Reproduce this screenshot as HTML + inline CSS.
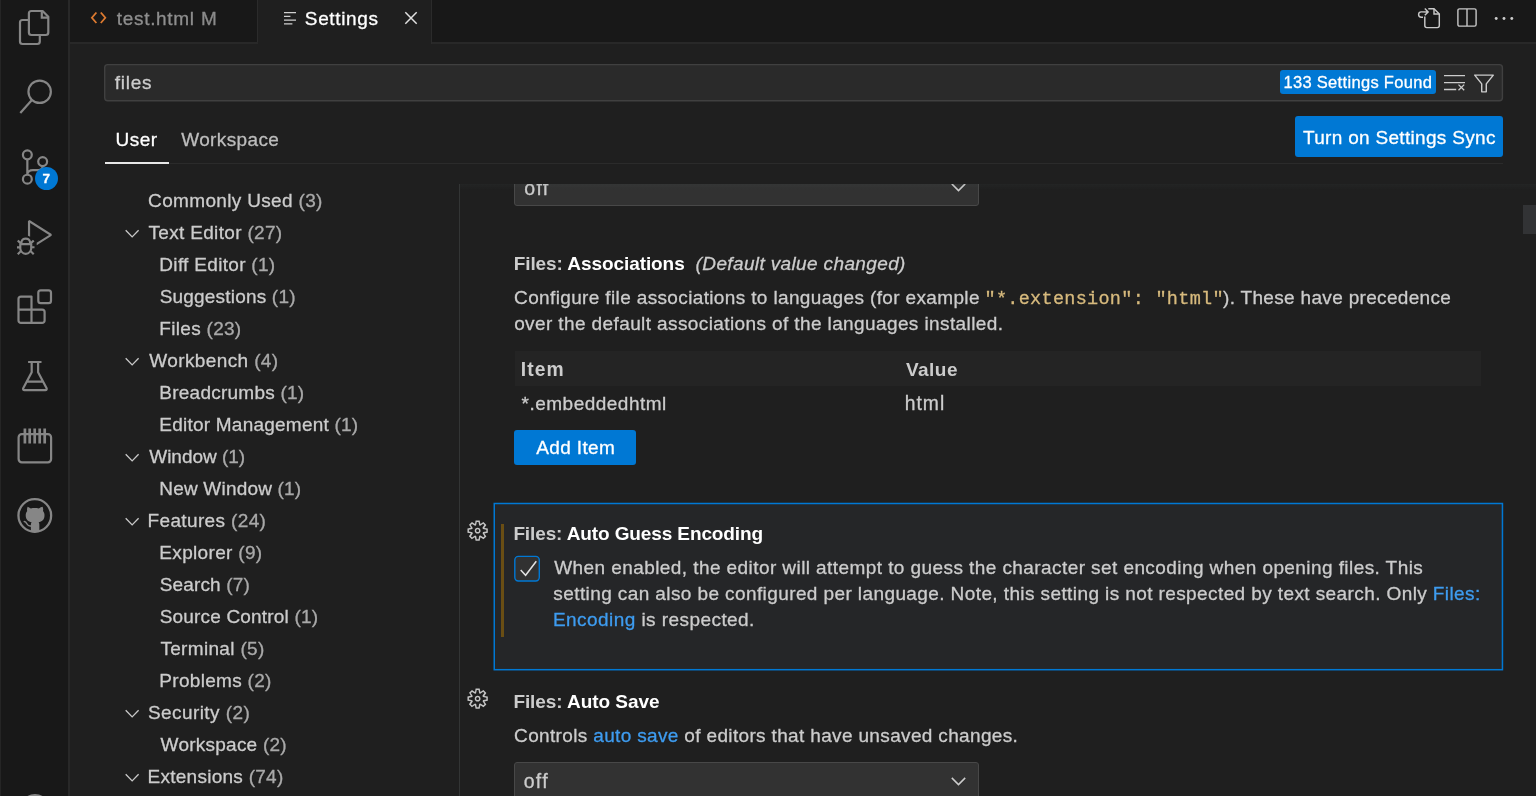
<!DOCTYPE html>
<html lang="en">
<head>
<meta charset="utf-8">
<title>Settings</title>
<style>
*{box-sizing:border-box;margin:0;padding:0}
html,body{width:1536px;height:796px;overflow:hidden;background:#1f1f1f}
body{position:relative;font-family:"Liberation Sans",sans-serif;font-size:19px;color:#cccccc;-webkit-font-smoothing:antialiased}
.abs{position:absolute}
.t{position:absolute;white-space:pre;line-height:32px;height:32px;-webkit-text-stroke:0.3px currentColor}
/* activity bar */
#activity{left:0;top:0;width:70px;height:796px;background:#181818;border-right:2px solid #282828;border-left:1px solid #252525}
#activity svg{position:absolute;overflow:visible}
/* tab strip */
#tabs{left:70px;top:0;width:1466px;height:44px;background:#181818;border-bottom:2px solid #282828}
#tab1{left:70px;top:0;width:188px;height:42px;border-right:1px solid #2b2b2b}
#tab2{left:258px;top:0;width:174px;height:44px;background:#1f1f1f;border-right:1px solid #2b2b2b}
/* settings header */
#search{left:105px;top:64px;width:1398px;height:38px;background:#2a2a2a;border:1px solid #3c3c3c;border-radius:3px}
#count{left:1280px;top:70px;width:156px;height:24px;background:#0078d4;border-radius:3px}
#sync{left:1295px;top:116px;width:208px;height:41px;background:#0078d4;border-radius:3px}
#hline{left:105px;top:163px;width:1398px;height:1px;background:#2b2b2b}
#uline{left:105px;top:162px;width:64px;height:2px;background:#e7e7e7}
/* toc */
#tocborder{left:459px;top:184px;width:1px;height:612px;background:#333535}
.toc{color:#cccccc}
.toc i{font-style:normal;opacity:.8}
.chev{position:absolute;width:14px;height:8px}
/* content */
.sel{position:absolute;background:#323232;border:1px solid #484848;border-radius:3px}
.hd{font-weight:700;color:#ffffff;-webkit-text-stroke:0}
.hd b{font-weight:700;color:#cccccc}
.desc{line-height:26px;height:26px}
a,.lnk{color:#3e9cf0;text-decoration:none}
.btn{position:absolute;background:#0078d4;border-radius:3px;color:#fff}
code{font-family:"Liberation Mono",monospace;color:#d7ba7d;font-size:19px}
</style>
</head>
<body>
<div id="root" style="position:absolute;left:0;top:0;width:1536px;height:796px;overflow:hidden;will-change:transform">

<!-- ACTIVITY BAR -->
<div id="activity" class="abs"></div>
<svg class="abs" style="left:0;top:0" width="69" height="796" viewBox="0 0 69 796" fill="none" stroke="#868686" stroke-width="2.2" stroke-linejoin="round">
<!-- explorer -->
<path d="M31.4 11H42.6L48.3 16.7V32.5a2.5 2.5 0 0 1-2.5 2.5H31.4a2.5 2.5 0 0 1-2.5-2.5V13.5a2.5 2.5 0 0 1 2.5-2.5z"/>
<path d="M41.8 11v6.6h6.5" stroke-linejoin="miter"/>
<path d="M28.9 20H22.5a2.5 2.5 0 0 0-2.5 2.5V41.5a2.5 2.5 0 0 0 2.5 2.5H37.3a2.5 2.5 0 0 0 2.5-2.5V35"/>
<!-- search -->
<circle cx="39.65" cy="91.75" r="11.2"/>
<path d="M31.9 99.9 20.3 112.9"/>
<!-- source control -->
<circle cx="27.35" cy="154.85" r="4.45"/>
<circle cx="27.35" cy="179.2" r="4.45"/>
<circle cx="42.65" cy="161.6" r="4.45"/>
<path d="M27.35 159.4v15.3M42.65 166.1c0 2.6-1.6 4-4.2 4h-5.6c-3.2 0-5.5 1.8-5.5 4.6"/>
<!-- extensions -->
<rect x="38.3" y="290.3" width="12.7" height="12.8" rx="2.4"/>
<path d="M31.5 296.6H21a2.5 2.5 0 0 0-2.5 2.5V320.4a2.5 2.5 0 0 0 2.5 2.5H42.1a2.5 2.5 0 0 0 2.5-2.5V312.1a2.5 2.5 0 0 0-2.5-2.5H31.5zM31.5 296.6a0 0 0 0 1 0 0V322.9M18.5 309.6H31.5"/>
<!-- beaker -->
<path d="M28.1 362H41.5M31.7 362v10.2L23.2 388.3a1.3 1.3 0 0 0 1.2 1.9H45.4a1.3 1.3 0 0 0 1.2-1.9L38.1 372.200V362M27.300 381.700H42.500"/>
<!-- notepad -->
<rect x="18.600" y="434.200" width="32.500" height="28.100" rx="3.200"/>
<path d="M24.900 428.400v15.200M29.700 428.400v15.200M34.700 428.400v15.200M39.700 428.400v15.200M44.700 428.400v15.200" stroke-width="2.700"/>
<!-- github -->
<circle cx="34.800" cy="515.500" r="16.350" stroke-width="2.300"/>
<!-- account (clipped) -->
<circle cx="35" cy="809.400" r="14.200" stroke-width="2.300"/>
</svg>
<!-- github cat -->
<svg class="abs" style="left:17px;top:497px" width="36" height="37" viewBox="17 497 36 37" fill="#868686"><path d="M27 506.800c.9 0 2.700.9 3.900 1.800 1.200-.35 2.500-.5 3.900-.5s2.700.15 3.900.5c1.200-.9 3-1.800 3.900-1.800.7 1.500.7 3.200.4 4.200 1 1.150 1.500 2.500 1.500 4.200 0 4.700-2.700 6.500-5.900 7 .6.700.75 1.500.75 2.700v6.700c-1.400.5-2.900.75-4.500.75s-2.700-.2-4-.6v-6.600c0-1.200.15-2.200.75-2.900-3.200-.5-5.900-2.400-5.900-7 0-1.700.5-3.050 1.500-4.200-.3-1-.3-2.700.4-4.200z"/><path d="M24.300 521.600c1.600.2 2.100 1.300 2.700 2.400.8 1.400 2 2.200 3.900 1.900" fill="none" stroke="#868686" stroke-width="1.500" stroke-linecap="round"/></svg>
<!-- debug-alt (codicon) -->
<svg class="abs" style="left:17.200px;top:219.500px" width="35" height="35" viewBox="0 0 24 24" fill="#868686"><path d="M10.940 13.500l-1.320 1.320a3.730 3.730 0 0 0-7.240 0L1.060 13.500 0 14.560l1.720 1.720-.22.220V18H0v1.500h1.500v.08c.077.489.214.966.410 1.420L0 22.940 1.060 24l1.650-1.650A4.308 4.308 0 0 0 6 24a4.310 4.310 0 0 0 3.290-1.650L10.940 24 12 22.940 10.090 21c.198-.464.336-.951.410-1.450v-.1H12V18h-1.500v-1.500l-.22-.22L12 14.560l-1.060-1.060zM6 13.500a2.250 2.250 0 0 1 2.250 2.250h-4.500A2.250 2.250 0 0 1 6 13.500zm3 6a3.330 3.330 0 0 1-3 3 3.330 3.330 0 0 1-3-3v-2.250h6v2.250zm14.760-9.900v1.260L13.500 17.370V15.600l8.500-5.370L9 2v9.460a5.070 5.070 0 0 0-1.500-.72V.63L8.640 0l15.120 9.600z"/></svg>
<!-- scm badge -->
<div class="abs" style="left:34.700px;top:166.850px;width:23.400px;height:23.400px;border-radius:50%;background:#0078d4"></div>
<span id="x_badge" class="t" style="left:42.600px;top:162.500px;color:#fff;font-size:13.500px;font-weight:700">7</span>

<!-- TAB STRIP -->
<div id="tabs" class="abs"></div>
<div id="tab1" class="abs"></div>
<div id="tab2" class="abs"></div>
<svg class="abs" style="left:86px;top:8px" width="24" height="20" viewBox="86 8 24 20" fill="none" stroke="#dd7a30" stroke-width="1.800" stroke-linejoin="miter"><path d="M96.400 12.500 91.900 17.750 96.400 23M100.800 12.500 105.300 17.750 100.800 23"/></svg>
<span id="x_tab1" class="t" style="left:116.75px;top:3px;color:#8e8e8e;letter-spacing:0.690px">test.html</span>
<span id="x_tabm" class="t" style="left:200.90px;top:3px;color:#8a8a8a;font-size:17.7px;transform:scaleX(1.07);transform-origin:0 0;letter-spacing:0.182px">M</span>
<svg class="abs" style="left:283px;top:11px" width="14" height="14" viewBox="0 0 14 14" fill="none" stroke="#d0d0d0" stroke-width="1.3"><path d="M1 1.700h12M1 5.400h6.400M1 9.100h12M1 12.800h8.400"/></svg>
<span id="x_tab2" class="t" style="left:304.85px;top:3px;color:#ffffff;letter-spacing:0.641px">Settings</span>
<svg class="abs" style="left:404px;top:11px" width="14" height="14" viewBox="0 0 14 14" fill="none" stroke="#e0e0e0" stroke-width="1.5"><path d="M1.3 1.3l11.4 11.4M12.7 1.3 1.3 12.7"/></svg>
<!-- editor actions -->
<svg class="abs" style="left:1410px;top:0px" width="40" height="40" viewBox="1410 0 40 40" fill="none" stroke="#c8c8c8" stroke-width="1.450"><path d="M1428.300 8.800H1434L1439.300 14.100V25.600a2 2 0 0 1-2 2H1426.800a2 2 0 0 1-2-2V16.400" stroke-linejoin="round"/><path d="M1434 8.800V14h5.300"/><path d="M1423 17.300h-1.700a2.700 2.700 0 0 1 0-5.400H1427.600M1424.800 8.600l3.300 3.300-3.300 3.300"/></svg>
<svg class="abs" style="left:1457px;top:8px" width="20" height="19" viewBox="0 0 20 19" fill="none" stroke="#c8c8c8" stroke-width="1.400"><rect x=".9" y=".9" width="18.2" height="17.2" rx="1.6"/><path d="M10 1v17"/></svg>
<svg class="abs" style="left:1494px;top:15.700px" width="20" height="5" viewBox="0 0 20 5" fill="#cccccc"><circle cx="2.2" cy="2.5" r="1.45"/><circle cx="10" cy="2.5" r="1.45"/><circle cx="17.8" cy="2.5" r="1.45"/></svg>

<!-- SETTINGS HEADER -->
<svg id="search" class="abs" style="left:100px;top:60px;background:none;border:0;width:1410px;height:46px" viewBox="100 60 1410 46" fill="none"><rect x="104.700" y="64.600" width="1397.700" height="36.200" rx="3" fill="#2a2a2a" stroke="#404040" stroke-width="1.400"/></svg>
<span id="x_files" class="t" style="left:114.81px;top:67px;color:#cccccc;letter-spacing:0.706px">files</span>
<div id="count" class="abs"></div>
<span id="x_count" class="t" style="left:1283.40px;top:66px;color:#ffffff;font-size:16.5px;letter-spacing:0.320px">133 Settings Found</span>
<svg class="abs" style="left:1444px;top:74px" width="23" height="18" viewBox="0 0 23 18" fill="none" stroke="#cccccc" stroke-width="1.4"><path d="M0 1.600h21M0 8.600h21M0 15.500h12.200"/><path d="M14.500 10.600l5.700 5.700M20.200 10.600l-5.700 5.700" stroke-width="1.300"/></svg>
<svg class="abs" style="left:1473px;top:73.500px" width="22" height="19" viewBox="0 0 22 20" fill="none" stroke="#cccccc" stroke-width="1.5" stroke-linejoin="round"><path d="M1.2 1.2h19.6L13.4 10.4v8.4H8.6v-8.4z"/></svg>
<span id="x_user" class="t" style="left:115.60px;top:124px;color:#ffffff;letter-spacing:0.435px">User</span>
<span id="x_ws" class="t" style="left:181.24px;top:124px;color:#bdbdbd;letter-spacing:0.365px">Workspace</span>
<div id="sync" class="abs"></div>
<span id="x_sync" class="t" style="left:1302.94px;top:122px;color:#ffffff;letter-spacing:0.312px">Turn on Settings Sync</span>
<div id="hline" class="abs"></div>
<div id="uline" class="abs"></div>

<!-- TOC -->
<div id="tocborder" class="abs"></div>
<span id="x_toc0" class="t toc" style="left:148.11px;top:185px;letter-spacing:0.335px">Commonly Used <i>(3)</i></span>
<svg class="chev" style="left:125px;top:229px;width:15px;height:10px" viewBox="0 0 15 10" fill="none" stroke="#c8c8c8" stroke-width="1.350"><path d="M.700 1.300 7.150 7.900 13.600 1.300"/></svg>
<span id="x_toc1" class="t toc" style="left:148.41px;top:217px;letter-spacing:0.330px">Text Editor <i>(27)</i></span>
<span id="x_toc2" class="t toc" style="left:159.33px;top:249px;letter-spacing:0.306px">Diff Editor <i>(1)</i></span>
<span id="x_toc3" class="t toc" style="left:159.63px;top:281px;letter-spacing:0.198px">Suggestions <i>(1)</i></span>
<span id="x_toc4" class="t toc" style="left:159.33px;top:313px;letter-spacing:0.298px">Files <i>(23)</i></span>
<svg class="chev" style="left:125px;top:357px;width:15px;height:10px" viewBox="0 0 15 10" fill="none" stroke="#c8c8c8" stroke-width="1.350"><path d="M.700 1.300 7.150 7.900 13.600 1.300"/></svg>
<span id="x_toc5" class="t toc" style="left:149.24px;top:345px;letter-spacing:0.388px">Workbench <i>(4)</i></span>
<span id="x_toc6" class="t toc" style="left:159.33px;top:377px;letter-spacing:0.238px">Breadcrumbs <i>(1)</i></span>
<span id="x_toc7" class="t toc" style="left:159.33px;top:409px;letter-spacing:0.225px">Editor Management <i>(1)</i></span>
<svg class="chev" style="left:125px;top:453px;width:15px;height:10px" viewBox="0 0 15 10" fill="none" stroke="#c8c8c8" stroke-width="1.350"><path d="M.700 1.300 7.150 7.900 13.600 1.300"/></svg>
<span id="x_toc8" class="t toc" style="left:149.24px;top:441px;letter-spacing:-0.017px">Window <i>(1)</i></span>
<span id="x_toc9" class="t toc" style="left:159.33px;top:473px;letter-spacing:0.188px">New Window <i>(1)</i></span>
<svg class="chev" style="left:125px;top:517px;width:15px;height:10px" viewBox="0 0 15 10" fill="none" stroke="#c8c8c8" stroke-width="1.350"><path d="M.700 1.300 7.150 7.900 13.600 1.300"/></svg>
<span id="x_toc10" class="t toc" style="left:147.53px;top:505px;letter-spacing:0.364px">Features <i>(24)</i></span>
<span id="x_toc11" class="t toc" style="left:159.33px;top:537px;letter-spacing:0.324px">Explorer <i>(9)</i></span>
<span id="x_toc12" class="t toc" style="left:159.63px;top:569px;letter-spacing:0.155px">Search <i>(7)</i></span>
<span id="x_toc13" class="t toc" style="left:159.63px;top:601px;letter-spacing:0.183px">Source Control <i>(1)</i></span>
<span id="x_toc14" class="t toc" style="left:160.41px;top:633px;letter-spacing:0.320px">Terminal <i>(5)</i></span>
<span id="x_toc15" class="t toc" style="left:159.33px;top:665px;letter-spacing:0.302px">Problems <i>(2)</i></span>
<svg class="chev" style="left:125px;top:709px;width:15px;height:10px" viewBox="0 0 15 10" fill="none" stroke="#c8c8c8" stroke-width="1.350"><path d="M.700 1.300 7.150 7.900 13.600 1.300"/></svg>
<span id="x_toc16" class="t toc" style="left:147.95px;top:697px;letter-spacing:0.424px">Security <i>(2)</i></span>
<span id="x_toc17" class="t toc" style="left:160.60px;top:729px;letter-spacing:0.239px">Workspace <i>(2)</i></span>
<svg class="chev" style="left:125px;top:773px;width:15px;height:10px" viewBox="0 0 15 10" fill="none" stroke="#c8c8c8" stroke-width="1.350"><path d="M.700 1.300 7.150 7.900 13.600 1.300"/></svg>
<span id="x_toc18" class="t toc" style="left:147.53px;top:761px;letter-spacing:0.266px">Extensions <i>(74)</i></span>

<!-- CONTENT -->
<!-- top dropdown (scrolled under header) -->
<div class="sel" style="left:514px;top:168px;width:465px;height:38px"></div>
<span id="x_off1" class="t" style="left:524.30px;top:172px;font-size:19.5px;letter-spacing:1.243px">off</span>
<svg class="chev" style="left:951px;top:183px;width:15px;height:9px" viewBox="0 0 15 9" fill="none" stroke="#cccccc" stroke-width="1.5"><path d="M.8.9 7.5 7.6 14.2.9"/></svg>
<!-- header cover + scroll shadow -->
<div class="abs" style="left:460px;top:164px;width:1076px;height:20px;background:#1f1f1f"></div>
<div class="abs" style="left:460px;top:184px;width:1076px;height:6px;background:linear-gradient(rgba(70,84,84,.10),rgba(70,84,84,0))"></div>
<!-- scrollbar thumb -->
<div class="abs" style="left:1523px;top:205px;width:13px;height:29px;background:#323335"></div>

<!-- Files: Associations -->
<span id="x_h1" class="t hd" style="left:513.69px;top:248px;letter-spacing:-0.080px"><b>Files: </b>Associations</span>
<span id="x_h1i" class="t" style="left:695.62px;top:248px;font-style:italic;color:#cccccc;letter-spacing:0.366px">(Default value changed)</span>
<span id="x_d1a1" class="t desc" style="left:514.12px;top:285px;letter-spacing:0.358px">Configure file associations to languages (for example</span>
<span id="x_d1code" class="t desc" style="left:984.49px;top:287px;font-family:'Liberation Mono',monospace;color:#d7ba7d;font-size:18.500px;letter-spacing:0.297px">"*.extension": "html"</span>
<span id="x_d1a2" class="t desc" style="left:1223.04px;top:285px;letter-spacing:0.322px">). These have precedence</span>
<span id="x_d1b" class="t desc" style="left:514.14px;top:311px;letter-spacing:0.392px">over the default associations of the languages installed.</span>
<div class="abs" style="left:515px;top:351px;width:966px;height:35px;background:#242424"></div>
<span id="x_th1" class="t" style="left:520.78px;top:354px;font-weight:700;-webkit-text-stroke:0;font-size:19.3px;letter-spacing:1.051px">Item</span>
<span id="x_th2" class="t" style="left:905.89px;top:354px;font-weight:700;-webkit-text-stroke:0;letter-spacing:0.494px">Value</span>
<span id="x_td1" class="t" style="left:521.61px;top:388px;letter-spacing:0.481px">*.embeddedhtml</span>
<span id="x_td2" class="t" style="left:904.75px;top:388px;font-size:19.3px;letter-spacing:1.014px">html</span>
<div class="btn" style="left:514px;top:430px;width:122px;height:35px"></div>
<span id="x_add" class="t" style="left:536.31px;top:432px;color:#fff;letter-spacing:0.355px">Add Item</span>

<!-- Files: Auto Guess Encoding (focused) -->
<svg class="abs" style="left:465.900px;top:518.500px" width="23.270" height="23.270" viewBox="0 0 16 16" fill="#c5c5c5"><path d="M9.1 4.4L8.6 2H7.4l-.5 2.4-.7.3-2-1.300-.9.8 1.300 2-.2.7-2.400.5v1.200l2.400.5.3.8-1.300 2 .8.8 2-1.300.8.3.4 2.300h1.200l.5-2.400.8-.3 2 1.300.8-.8-1.300-2 .3-.8 2.300-.4V7.400l-2.400-.5-.3-.8 1.300-2-.8-.8-2 1.300-.7-.2zM9.400 1l.5 2.400L12 2.100l2 2-1.400 2.100 2.400.4v2.800l-2.400.5L14 12l-2 2-2.100-1.400-.5 2.400H6.600l-.5-2.400L4 13.900l-2-2 1.400-2.100L1 9.400V6.600l2.400-.5L2.100 4l2-2 2.100 1.400.4-2.400h2.800zm.6 7c0 1.100-.9 2-2 2s-2-.9-2-2 .9-2 2-2 2 .9 2 2zM8 9c.6 0 1-.4 1-1s-.4-1-1-1-1 .4-1 1 .4 1 1 1z"/></svg>
<div class="abs" style="left:494px;top:503px;width:1009px;height:167px;background:#252628"></div>
<svg class="abs" style="left:492px;top:501px" width="1013" height="171" viewBox="0 0 1013 171" fill="none"><rect x="2.250" y="2.500" width="1008.200" height="166.200" stroke="#0078d4" stroke-width="1.500"/></svg>
<div class="abs" style="left:501px;top:524px;width:3px;height:113px;background:#6a4e14"></div>
<span id="x_h2" class="t hd" style="left:513.38px;top:518px;letter-spacing:-0.119px"><b>Files: </b>Auto Guess Encoding</span>
<svg class="abs" style="left:510px;top:550px" width="36" height="36" viewBox="510 550 36 36" fill="none"><rect x="514.800" y="556.350" width="24.500" height="24.600" rx="3.600" fill="#313131" stroke="#0078d4" stroke-width="1.400"/><path d="M520.700 569.900l4.900 5.400 10.700-14.100" stroke="#e2e2e2" stroke-width="1.500"/></svg>
<span id="x_d2a" class="t desc" style="left:554.24px;top:555px;letter-spacing:0.421px">When enabled, the editor will attempt to guess the character set encoding when opening files. This</span>
<span id="x_d2b" class="t desc" style="left:553.37px;top:581px;letter-spacing:0.401px">setting can also be configured per language. Note, this setting is not respected by text search. Only <span class="lnk">Files:</span></span>
<span id="x_d2c" class="t desc" style="left:552.97px;top:607px;letter-spacing:0.437px"><span class="lnk">Encoding</span> is respected.</span>

<!-- Files: Auto Save -->
<svg class="abs" style="left:465.900px;top:687.100px" width="23.270" height="23.270" viewBox="0 0 16 16" fill="#c5c5c5"><path d="M9.1 4.4L8.6 2H7.4l-.5 2.4-.7.3-2-1.300-.9.8 1.300 2-.2.7-2.400.5v1.200l2.400.5.3.8-1.300 2 .8.8 2-1.300.8.3.4 2.300h1.200l.5-2.400.8-.3 2 1.300.8-.8-1.300-2 .3-.8 2.300-.4V7.400l-2.400-.5-.3-.8 1.300-2-.8-.8-2 1.300-.7-.2zM9.400 1l.5 2.400L12 2.100l2 2-1.400 2.100 2.400.4v2.800l-2.400.5L14 12l-2 2-2.100-1.400-.5 2.400H6.600l-.5-2.400L4 13.900l-2-2 1.400-2.100L1 9.400V6.600l2.400-.5L2.100 4l2-2 2.100 1.400.4-2.400h2.800zm.6 7c0 1.100-.9 2-2 2s-2-.9-2-2 .9-2 2-2 2 .9 2 2zM8 9c.6 0 1-.4 1-1s-.4-1-1-1-1 .4-1 1 .4 1 1 1z"/></svg>
<span id="x_h3" class="t hd" style="left:513.38px;top:686px;letter-spacing:-0.068px"><b>Files: </b>Auto Save</span>
<span id="x_d3" class="t desc" style="left:514.12px;top:723px;letter-spacing:0.344px">Controls <span class="lnk">auto save</span> of editors that have unsaved changes.</span>
<div class="sel" style="left:514px;top:762px;width:465px;height:38px"></div>
<span id="x_off2" class="t" style="left:523.75px;top:765px;font-size:19.5px;letter-spacing:1.247px">off</span>
<svg class="chev" style="left:951px;top:776.500px;width:15px;height:9px" viewBox="0 0 15 9" fill="none" stroke="#cccccc" stroke-width="1.5"><path d="M.8.9 7.5 7.6 14.2.9"/></svg>

</div>
</body>
</html>
